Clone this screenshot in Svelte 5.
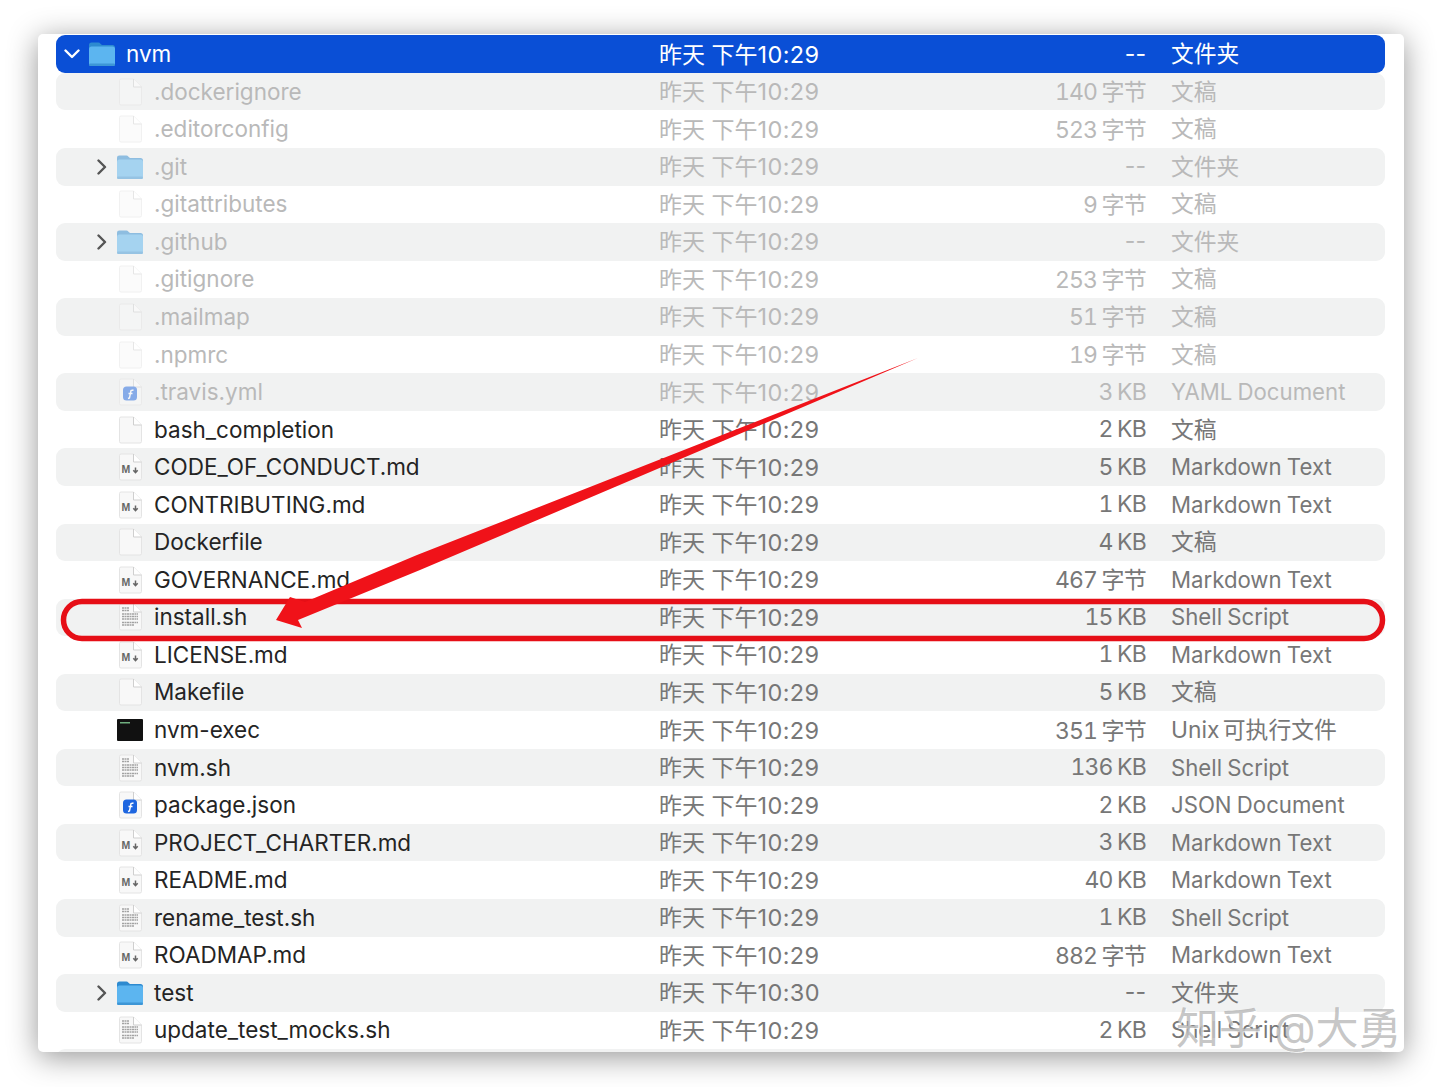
<script>
    const day = '昨天 下午';

    const files = [
        { name: 'nvm', time: '10:29', size: '--', kind: '文件夹', icon: 'folder', open: true, selected: true },
        { name: '.dockerignore', time: '10:29', size: '140 字节', kind: '文稿', icon: 'doc', hidden: true },
        { name: '.editorconfig', time: '10:29', size: '523 字节', kind: '文稿', icon: 'doc', hidden: true },
        { name: '.git', time: '10:29', size: '--', kind: '文件夹', icon: 'folder', hidden: true, closed: true },
        { name: '.gitattributes', time: '10:29', size: '9 字节', kind: '文稿', icon: 'doc', hidden: true },
        { name: '.github', time: '10:29', size: '--', kind: '文件夹', icon: 'folder', hidden: true, closed: true },
        { name: '.gitignore', time: '10:29', size: '253 字节', kind: '文稿', icon: 'doc', hidden: true },
        { name: '.mailmap', time: '10:29', size: '51 字节', kind: '文稿', icon: 'doc', hidden: true },
        { name: '.npmrc', time: '10:29', size: '19 字节', kind: '文稿', icon: 'doc', hidden: true },
        { name: '.travis.yml', time: '10:29', size: '3 KB', kind: 'YAML Document', icon: 'json', hidden: true },
        { name: 'bash_completion', time: '10:29', size: '2 KB', kind: '文稿', icon: 'doc' },
        { name: 'CODE_OF_CONDUCT.md', time: '10:29', size: '5 KB', kind: 'Markdown Text', icon: 'md' },
        { name: 'CONTRIBUTING.md', time: '10:29', size: '1 KB', kind: 'Markdown Text', icon: 'md' },
        { name: 'Dockerfile', time: '10:29', size: '4 KB', kind: '文稿', icon: 'doc' },
        { name: 'GOVERNANCE.md', time: '10:29', size: '467 字节', kind: 'Markdown Text', icon: 'md' },
        { name: 'install.sh', time: '10:29', size: '15 KB', kind: 'Shell Script', icon: 'sh' },
        { name: 'LICENSE.md', time: '10:29', size: '1 KB', kind: 'Markdown Text', icon: 'md' },
        { name: 'Makefile', time: '10:29', size: '5 KB', kind: '文稿', icon: 'doc' },
        { name: 'nvm-exec', time: '10:29', size: '351 字节', kind: 'Unix 可执行文件', icon: 'exec' },
        { name: 'nvm.sh', time: '10:29', size: '136 KB', kind: 'Shell Script', icon: 'sh' },
        { name: 'package.json', time: '10:29', size: '2 KB', kind: 'JSON Document', icon: 'json' },
        { name: 'PROJECT_CHARTER.md', time: '10:29', size: '3 KB', kind: 'Markdown Text', icon: 'md' },
        { name: 'README.md', time: '10:29', size: '40 KB', kind: 'Markdown Text', icon: 'md' },
        { name: 'rename_test.sh', time: '10:29', size: '1 KB', kind: 'Shell Script', icon: 'sh' },
        { name: 'ROADMAP.md', time: '10:29', size: '882 字节', kind: 'Markdown Text', icon: 'md' },
        { name: 'test', time: '10:30', size: '--', kind: '文件夹', icon: 'folder', closed: true },
        { name: 'update_test_mocks.sh', time: '10:29', size: '2 KB', kind: 'Shell Script', icon: 'sh' },
    ];

    // lines of the little script preview on the .sh icons
    const scriptLines = [
        [4, 7], [4, 7],
        [4, 16], [4, 16], [4, 16],
        [4, 16], [4, 12],
    ];
    const scriptY = [5, 7.5, 11, 13.5, 16, 19.5, 22];

    const hasCjk = (text) => /[^\x00-\x7f]/.test(text);
</script>

{#snippet sheet()}
    <path d="M1.500 2.500a1.500 1.500 0 0 1 1.500-1.500h12.500l8 8v16.500a1.500 1.500 0 0 1-1.500 1.500H3a1.500 1.500 0 0 1-1.500-1.500z" fill="#f8f8f8" stroke="#e4e4e4" />
    <path d="M15.500 1v8h8" fill="#fff" stroke="#cfcfcf" />
{/snippet}

{#snippet icon(type)}
    {#if type === 'folder'}
        <svg class="icon" viewBox="0 0 28 26" width="28" height="26">
            <path d="M1 4a2.500 2.500 0 0 1 2.500-2.500h7c1.500 0 2 1.500 3.500 2.500h10.500A2.500 2.500 0 0 1 27 6.500v4H1z" fill="#2d8ad0" />
            <rect x="1" y="5.500" width="26" height="19.500" rx="2.500" fill="#5cb5f0" />
            <rect x="1" y="22.500" width="26" height="2.500" rx="1.200" fill="#3d96d6" />
        </svg>
    {:else if type === 'exec'}
        <svg class="icon" viewBox="0 0 28 26" width="28" height="26">
            <rect x="1" y="2" width="26" height="22" rx="1" fill="#111" />
            <rect x="4" y="5" width="10" height="1.500" fill="#6fae7e" />
        </svg>
    {:else}
        <svg class="icon" viewBox="0 0 25 28" width="25" height="28">
            {@render sheet()}
            {#if type === 'md'}
                <text x="3.500" y="20" class="md-mark">M</text>
                <path d="M17.500 14.500v5M15.300 17.300l2.200 2.400 2.200-2.400" fill="none" stroke="#666" stroke-width="1.500" />
            {:else if type === 'sh'}
                {#each scriptLines as line, i}
                    <path d="M{line[0]} {scriptY[i]}h{line[1]}" stroke="#a2a2a2" stroke-width="1.500" stroke-dasharray="2 .5" />
                {/each}
            {:else if type === 'json'}
                <rect x="5" y="8.500" width="14" height="14" rx="3.500" fill="#1e66e0" />
                <path d="M10 20.500l1.500-.5 1.500-7.500 2.500-.5M10.500 15.500h4" stroke="#fff" stroke-width="1.400" fill="none" />
            {/if}
        </svg>
    {/if}
{/snippet}

<div class="page">
    <div class="window">
        {#each files as file, i}
            <div class="row" class:stripe={i % 2 === 1} class:selected={file.selected} class:dim={file.hidden}>
                <div class="name-cell" class:nested={!file.selected}>
                    <span class="chevron">
                        {#if file.open}
                            <svg viewBox="0 0 16 12" width="16" height="12"><path d="M1.500 2.500L8 9l6.500-6.500" fill="none" stroke="#fff" stroke-width="2.400" stroke-linecap="round" stroke-linejoin="round" /></svg>
                        {:else if file.closed}
                            <svg viewBox="0 0 12 16" width="12" height="16"><path d="M2.500 1.500L9 8l-6.500 6.500" fill="none" stroke="#555" stroke-width="2.400" stroke-linecap="round" stroke-linejoin="round" /></svg>
                        {/if}
                    </span>
                    <span class="icon-box">{@render icon(file.icon)}</span>
                    <span class="name">{file.name}</span>
                </div>
                <div class="date cjk">{day}<span class="clock">{file.time}</span></div>
                <div class="size" class:cjk={hasCjk(file.size)} class:dash={file.size === '--'}>{file.size}</div>
                <div class="kind" class:cjk={hasCjk(file.kind)}>{file.kind}</div>
            </div>
        {/each}
        <div class="row stripe"></div>
    </div>

    <svg class="marks" viewBox="0 0 1440 1087" width="1440" height="1087">
        <rect x="63.500" y="601.500" width="1319" height="37" rx="18.500" fill="none" stroke="#e60f17" stroke-width="5.500" />
        <polygon points="918,358 420,570 298,620 302,628 276,620 290,597 305,602 417,555" fill="#f01219" />
    </svg>

    <div class="watermark">知乎 @大勇</div>
</div>

<style>
    :global(body) {
        background: #fff;
    }

    .page {
        position: relative;
        width: 1440px;
        height: 1087px;
        padding: 34px 36px 35px 38px;
        box-sizing: border-box;
        overflow: hidden;
        font-family: Inter, "Noto Sans CJK SC", sans-serif;
    }

    .window {
        height: 100%;
        padding: 1.400px 19px 0 18px;
        box-sizing: border-box;
        background: #fff;
        border-radius: 5px;
        overflow: hidden;
        box-shadow: 0 5px 30px rgba(0, 0, 0, 0.42);
    }

    .row {
        display: grid;
        grid-template-columns: 603px 300px 187px 25px 1fr;
        align-items: center;
        height: 37.550px;
        border-radius: 9px;
        font-size: 23px;
        color: #777;
        white-space: nowrap;
    }

    .stripe {
        background: #f1f2f2;
    }

    .selected {
        background: #0a4fd6;
        color: #fff;
    }

    .name-cell {
        display: flex;
        align-items: center;
    }

    .nested {
        padding-left: 30px;
    }

    .chevron {
        display: flex;
        justify-content: center;
        align-items: center;
        width: 30px;
        padding-left: 2px;
        box-sizing: border-box;
    }

    .icon-box {
        display: flex;
        justify-content: center;
        align-items: center;
        width: 28px;
        height: 37px;
    }

    .selected .icon-box {
        margin-left: 2px;
    }

    .icon {
        display: block;
        flex: none;
    }

    .md-mark {
        font-size: 10.500px;
        font-weight: 700;
        fill: #666;
        font-family: "Liberation Sans", sans-serif;
    }

    .name {
        margin-left: 10px;
        margin-bottom: 1px;
        font-size: 22.500px;
        color: #242424;
    }

    .selected .name {
        color: #fff;
    }

    .size,
    .kind {
        margin-bottom: 1px;
    }

    /* CJK fallback pushes the baseline down a bit */
    .cjk {
        margin-bottom: 3px;
    }

    .clock {
        font-size: 23.500px;
        letter-spacing: 0.4px;
    }

    .size {
        text-align: right;
        word-spacing: -1px;
        font-variant-numeric: tabular-nums;
        letter-spacing: -0.8px;
    }

    .size.dash {
        font-variant-numeric: normal;
        letter-spacing: 0;
    }

    .kind {
        grid-column: 5;
        font-size: 22.200px;
        word-spacing: -1px;
    }

    .kind.cjk {
        font-size: 22.800px;
        word-spacing: -3px;
    }

    .dim .name,
    .dim .date,
    .dim .size,
    .dim .kind {
        color: #b9b9b9;
    }

    .dim .icon-box {
        opacity: 0.5;
    }

    .marks {
        position: absolute;
        left: 0;
        top: 0;
        pointer-events: none;
    }

    .watermark {
        position: absolute;
        left: 1176px;
        top: 1003px;
        font-size: 43px;
        line-height: 50px;
        color: rgba(150, 150, 150, 0.55);
        text-shadow: 1px 1px 0 rgba(255, 255, 255, 0.8);
        white-space: nowrap;
    }
</style>
